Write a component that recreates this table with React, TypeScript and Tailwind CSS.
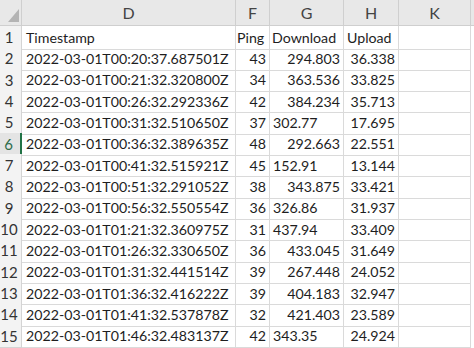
const rows: [string, string, string, boolean, string][] = [
  ["2022-03-01T00:20:37.687501Z", "43", "294.803", true, "36.338"],
  ["2022-03-01T00:21:32.320800Z", "34", "363.536", true, "33.825"],
  ["2022-03-01T00:26:32.292336Z", "42", "384.234", true, "35.713"],
  ["2022-03-01T00:31:32.510650Z", "37", "302.77", false, "17.695"],
  ["2022-03-01T00:36:32.389635Z", "48", "292.663", true, "22.551"],
  ["2022-03-01T00:41:32.515921Z", "45", "152.91", false, "13.144"],
  ["2022-03-01T00:51:32.291052Z", "38", "343.875", true, "33.421"],
  ["2022-03-01T00:56:32.550554Z", "36", "326.86", false, "31.937"],
  ["2022-03-01T01:21:32.360975Z", "31", "437.94", false, "33.409"],
  ["2022-03-01T01:26:32.330650Z", "36", "433.045", true, "31.649"],
  ["2022-03-01T01:31:32.441514Z", "39", "267.448", true, "24.052"],
  ["2022-03-01T01:36:32.416222Z", "39", "404.183", true, "32.947"],
  ["2022-03-01T01:41:32.537878Z", "32", "421.403", true, "23.589"],
  ["2022-03-01T01:46:32.483137Z", "42", "343.35", false, "24.924"],
];

const cols = "grid grid-cols-[22px_214px_34px_74px_55px_72px_1fr]";
const cell = "border-r border-b border-[#dadada] flex items-center whitespace-nowrap overflow-hidden";
const head = "border-r border-b border-[#cfcfcf] bg-[#e8e8e8] flex items-center justify-center text-[#444] text-[16px]";
const rowHead = "border-r border-b border-[#d4d4d4] bg-[#f3f3f3] flex items-center justify-center pr-[3px] text-[#333] text-[15px]";

function Row({ n, cells }: { n: number; cells: [string, string, string, boolean, string] | null }) {
  const selected = n === 6;
  return (
    <div className={`${cols} h-[21.33px]`}>
      <div
        className={
          selected
            ? "border-b border-[#d4d4d4] border-r-2 border-r-[#217346] bg-[#e4e4e4] flex items-center justify-center pr-[3px] text-[#2e6b4a] text-[15px]"
            : rowHead
        }
      >
        {n}
      </div>
      {cells ? (
        <>
          <div className={`${cell} pl-[4px]`}>{cells[0]}</div>
          <div className={`${cell} justify-end pr-[3px]`}>{cells[1]}</div>
          <div className={`${cell} ${cells[3] ? "justify-end pr-[3px]" : "pl-[3px]"}`}>{cells[2]}</div>
          <div className={`${cell} justify-end pr-[3px]`}>{cells[4]}</div>
        </>
      ) : (
        <>
          <div className={`${cell} pl-[4px]`}>Timestamp</div>
          <div className={`${cell} pl-[1px]`}>Ping</div>
          <div className={`${cell} pl-[2px]`}>Download</div>
          <div className={`${cell} pl-[3px]`}>Upload</div>
        </>
      )}
      <div className={cell}></div>
      <div></div>
    </div>
  );
}

export default function App() {
  return (
    <div className="w-[474px] h-[348px] overflow-hidden bg-white font-['Lato',sans-serif] text-[14.2px] text-[#1e1e1e]">
      <div className={`${cols} h-[26px]`}>
        <div className="border-r border-b border-[#cfcfcf] bg-[#e8e8e8] relative">
          <svg className="absolute left-[8px] top-[9px]" width="11" height="13" viewBox="0 0 11 13">
            <polygon points="11,0 11,13 0,13" fill="#b4b4b4" />
          </svg>
        </div>
        <div className={head}>D</div>
        <div className={head}>F</div>
        <div className={head}>G</div>
        <div className={head}>H</div>
        <div className={head}>K</div>
        <div className="border-b border-[#cfcfcf] bg-[#e8e8e8]"></div>
      </div>
      <Row n={1} cells={null} />
      {rows.map((r, i) => (
        <Row key={i} n={i + 2} cells={r} />
      ))}
    </div>
  );
}
